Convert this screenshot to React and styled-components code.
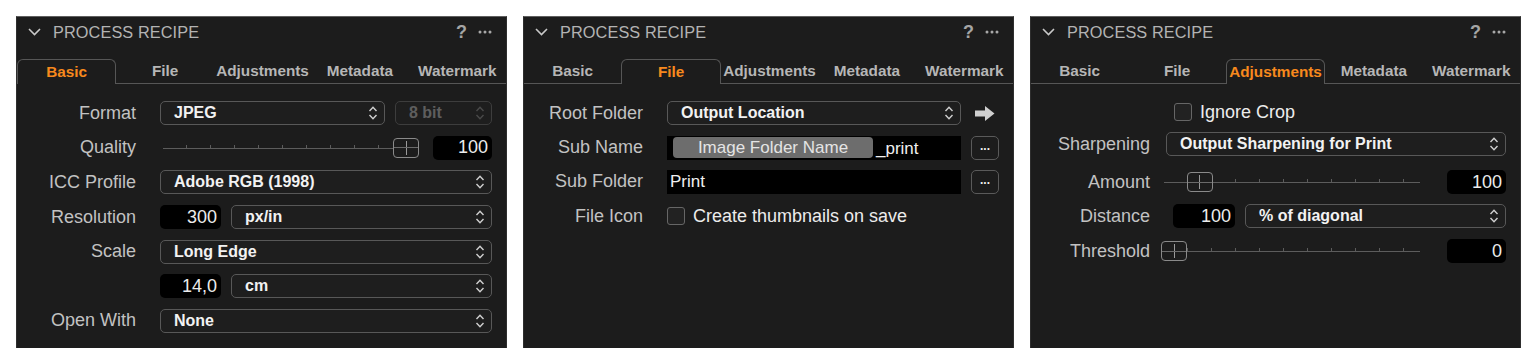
import React from 'react'
import styled, { createGlobalStyle } from 'styled-components'

const GlobalStyle = createGlobalStyle`
  html, body { margin: 0; background: #fff; }
  body { font-family: "Liberation Sans", Arial, sans-serif; }
`;

function Chevron() {
  return (
    <svg width="13" height="8" viewBox="0 0 13 8">
      <path d="M1 1 L6.5 6.5 L12 1" fill="none" stroke="#c8c8c8" strokeWidth="1.6" />
    </svg>
  );
}

function UpDown() {
  return (
    <svg width="10" height="16" viewBox="0 0 10 16">
      <path d="M1.5 6 L5 2.2 L8.5 6 M1.5 10 L5 13.8 L8.5 10" fill="none" stroke="currentColor" strokeWidth="1.4" />
    </svg>
  );
}

function Dots() {
  return (
    <svg width="14" height="4" viewBox="0 0 14 4">
      <circle cx="2" cy="2" r="1.5" fill="#a8a8a8" />
      <circle cx="7" cy="2" r="1.5" fill="#a8a8a8" />
      <circle cx="12" cy="2" r="1.5" fill="#a8a8a8" />
    </svg>
  );
}

function RightArrow() {
  return (
    <svg width="20" height="15" viewBox="0 0 20 15">
      <path d="M0 4.5 H10 V0 L19.5 7.5 L10 15 V10.5 H0 Z" fill="#cfcfcf" />
    </svg>
  );
}

const TABS = ['Basic', 'File', 'Adjustments', 'Metadata', 'Watermark'];

function PanelFrame({ active, children }) {
  return (
    <Panel>
      <Header>
        <Chevron />
        <Title>PROCESS RECIPE</Title>
        <HeaderTools>
          <Help>?</Help>
          <Dots />
        </HeaderTools>
      </Header>
      <TabBar>
        {TABS.map((t) => (
          <Tab key={t} $active={t === active}>{t}</Tab>
        ))}
      </TabBar>
      <Body>{children}</Body>
    </Panel>
  );
}

function Select({ children, width, disabled }) {
  return (
    <SelectBox $w={width} $disabled={disabled}>
      <span>{children}</span>
      <UpDown />
    </SelectBox>
  );
}

function Slider({ value }) {
  return (
    <Track>
      <Thumb style={{ left: `calc((100% - 26px) * ${value})` }} />
    </Track>
  );
}

function BasicPanel() {
  return (
    <PanelFrame active="Basic">
      <Row>
        <Label>Format</Label>
        <Controls>
          <Select>JPEG</Select>
          <Select width={97} disabled>8 bit</Select>
        </Controls>
      </Row>
      <Row>
        <Label>Quality</Label>
        <Controls $gap={14}>
          <Slider value={1} />
          <NumberBox $w={59}>100</NumberBox>
        </Controls>
      </Row>
      <Row>
        <Label>ICC Profile</Label>
        <Controls><Select>Adobe RGB (1998)</Select></Controls>
      </Row>
      <Row>
        <Label>Resolution</Label>
        <Controls>
          <NumberBox>300</NumberBox>
          <Select>px/in</Select>
        </Controls>
      </Row>
      <Row>
        <Label>Scale</Label>
        <Controls><Select>Long Edge</Select></Controls>
      </Row>
      <Row>
        <Label />
        <Controls>
          <NumberBox>14,0</NumberBox>
          <Select>cm</Select>
        </Controls>
      </Row>
      <Row>
        <Label>Open With</Label>
        <Controls><Select>None</Select></Controls>
      </Row>
    </PanelFrame>
  );
}

function FilePanel() {
  return (
    <PanelFrame active="File">
      <Row $h={34.4}>
        <Label>Root Folder</Label>
        <Controls>
          <Select>Output Location</Select>
          <ArrowSlot><RightArrow /></ArrowSlot>
        </Controls>
      </Row>
      <Row $h={34.4}>
        <Label>Sub Name</Label>
        <Controls>
          <TextField>
            <Token>Image Folder Name</Token>
            <Suffix>_print</Suffix>
          </TextField>
          <DotsButton>...</DotsButton>
        </Controls>
      </Row>
      <Row $h={34.4}>
        <Label>Sub Folder</Label>
        <Controls>
          <TextField>Print</TextField>
          <DotsButton>...</DotsButton>
        </Controls>
      </Row>
      <Row $h={34.4}>
        <Label>File Icon</Label>
        <Controls>
          <Check />
          <CheckText>Create thumbnails on save</CheckText>
        </Controls>
      </Row>
    </PanelFrame>
  );
}

function AdjustmentsPanel() {
  return (
    <PanelFrame active="Adjustments">
      <Row $h={32} $gap={16}>
        <Label />
        <Controls $indent={8}>
          <Check />
          <CheckText>Ignore Crop</CheckText>
        </Controls>
      </Row>
      <Row $h={32} $gap={16}>
        <Label>Sharpening</Label>
        <Controls><Select>Output Sharpening for Print</Select></Controls>
      </Row>
      <Row $h={44} $gap={16}>
        <Label>Amount</Label>
        <Controls $gap={27} $indent={-5}>
          <Slider value={0.11} />
          <NumberBox $w={59}>100</NumberBox>
        </Controls>
      </Row>
      <Row $h={24} $gap={16}>
        <Label>Distance</Label>
        <Controls $indent={7}>
          <NumberBox $w={62}>100</NumberBox>
          <Select>% of diagonal</Select>
        </Controls>
      </Row>
      <Row $h={46} $gap={16}>
        <Label>Threshold</Label>
        <Controls $gap={27} $indent={-5}>
          <Slider value={0} />
          <NumberBox $w={59}>0</NumberBox>
        </Controls>
      </Row>
    </PanelFrame>
  );
}

export default function App() {
  return (
    <>
      <GlobalStyle />
      <Page>
        <BasicPanel />
        <FilePanel />
        <AdjustmentsPanel />
      </Page>
    </>
  );
}

const Page = styled.div`
  display: flex;
  gap: 16px;
  padding: 16px 0 0 16px;
`;

const Panel = styled.div`
  width: 491px;
  height: 332px;
  box-sizing: border-box;
  background: #1c1c1c;
  border-top: 1px solid #5f5f5f;
  border-left: 1px solid #2e2e2e;
  border-right: 1px solid #2e2e2e;
  display: flex;
  flex-direction: column;
`;

const Header = styled.div`
  height: 30px;
  display: flex;
  align-items: center;
  padding: 0 14px 0 11px;
  svg { flex: none; }
`;

const Title = styled.div`
  margin-left: 12px;
  font-size: 16.3px;
  color: #b3b3b3;
  letter-spacing: 0.1px;
`;

const HeaderTools = styled.div`
  margin-left: auto;
  display: flex;
  align-items: center;
  gap: 11px;
`;

const Help = styled.span`
  font-size: 18px;
  font-weight: 700;
  color: #a5a5a5;
`;

const TabBar = styled.div`
  display: flex;
  margin-top: 12px;
  height: 25px;
`;

const Tab = styled.div`
  flex: 1;
  display: flex;
  align-items: center;
  justify-content: center;
  box-sizing: border-box;
  font-size: 15.3px;
  font-weight: 700;
  color: ${(p) => (p.$active ? '#f7891d' : '#b6b6b6')};
  border-bottom: ${(p) => (p.$active ? 'none' : '1px solid #565656')};
  border-top: ${(p) => (p.$active ? '1px solid #565656' : 'none')};
  border-left: ${(p) => (p.$active ? '1px solid #565656' : 'none')};
  border-right: ${(p) => (p.$active ? '1px solid #565656' : 'none')};
  border-radius: ${(p) => (p.$active ? '6px 6px 0 0' : '0')};
`;

const Body = styled.div`
  padding: 12px 14px 0 0;
  display: flex;
  flex-direction: column;
`;

const Row = styled.div`
  display: grid;
  grid-template-columns: 119px 1fr;
  column-gap: ${(p) => p.$gap ?? 24}px;
  align-items: center;
  height: ${(p) => p.$h ?? 34.6}px;
`;

const Label = styled.div`
  text-align: right;
  font-size: 18px;
  color: #c2c2c2;
  white-space: nowrap;
`;

const Controls = styled.div`
  display: flex;
  align-items: center;
  gap: ${(p) => p.$gap ?? 10}px;
  margin-left: ${(p) => p.$indent ?? 0}px;
  min-width: 0;
`;

const SelectBox = styled.div`
  flex: ${(p) => (p.$w ? `0 0 ${p.$w}px` : '1')};
  height: 24px;
  box-sizing: border-box;
  border: 1px solid ${(p) => (p.$disabled ? '#3d3d3d' : '#585858')};
  border-radius: 5px;
  background: #1e1e1e;
  display: flex;
  align-items: center;
  justify-content: space-between;
  padding: 0 6px 0 13px;
  font-size: 16px;
  font-weight: 700;
  color: ${(p) => (p.$disabled ? '#5e5e5e' : '#f2f2f2')};
  svg { color: ${(p) => (p.$disabled ? '#4a4a4a' : '#cfcfcf')}; }
`;

const NumberBox = styled.div`
  flex: 0 0 ${(p) => p.$w ?? 61}px;
  height: 24px;
  box-sizing: border-box;
  background: #000;
  border-radius: 5px;
  display: flex;
  align-items: center;
  justify-content: flex-end;
  padding-right: 4px;
  font-size: 18px;
  color: #ececec;
`;

const Track = styled.div`
  position: relative;
  flex: 1;
  height: 20px;
  &::before {
    content: '';
    position: absolute;
    left: 3px;
    right: 0;
    top: 10px;
    height: 1px;
    background: #5c5c5c;
  }
  &::after {
    content: '';
    position: absolute;
    left: 3px;
    right: 0;
    top: 7px;
    height: 3px;
    background: repeating-linear-gradient(90deg, transparent 0 23px, #5c5c5c 23px 24px);
  }
`;

const Thumb = styled.div`
  position: absolute;
  top: 0;
  width: 26px;
  height: 20px;
  box-sizing: border-box;
  border: 1.5px solid #8a8a8a;
  border-radius: 4px;
  background: #1c1c1c;
  z-index: 1;
  &::before {
    content: '';
    position: absolute;
    left: 11.5px;
    top: 2px;
    bottom: 2px;
    width: 1px;
    background: #9a9a9a;
  }
  &::after {
    content: '';
    position: absolute;
    left: 0;
    right: 0;
    top: 8.5px;
    height: 1px;
    background: #6a6a6a;
  }
`;

const ArrowSlot = styled.div`
  flex: 0 0 28px;
  display: flex;
  justify-content: center;
`;

const TextField = styled.div`
  flex: 1;
  height: 24px;
  background: #000;
  display: flex;
  align-items: center;
  padding-left: 3px;
  font-size: 17px;
  color: #f0f0f0;
`;

const Token = styled.span`
  width: 200px;
  height: 21px;
  margin-left: 3px;
  background: #6d6d6d;
  border-radius: 4px;
  display: flex;
  align-items: center;
  justify-content: center;
  color: #e4e4e4;
  font-size: 17px;
`;

const Suffix = styled.span`
  margin-left: 3px;
  padding-top: 3px;
`;

const DotsButton = styled.div`
  flex: 0 0 28px;
  height: 24px;
  box-sizing: border-box;
  border: 1px solid #5a5a5a;
  border-radius: 5px;
  display: flex;
  align-items: center;
  justify-content: center;
  font-size: 12px;
  font-weight: 700;
  color: #f2f2f2;
  padding-bottom: 4px;
`;

const Check = styled.div`
  flex: 0 0 18px;
  height: 18px;
  box-sizing: border-box;
  border: 1px solid #666;
  border-radius: 3px;
  background: #222;
`;

const CheckText = styled.span`
  margin-left: -2px;
  font-size: 18px;
  color: #ececec;
  white-space: nowrap;
`;
